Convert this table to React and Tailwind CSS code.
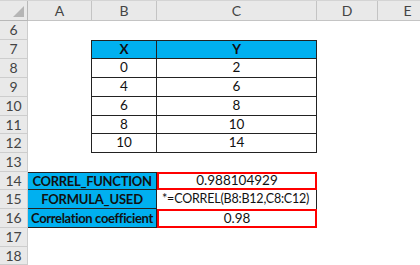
const cols = [
  { name: "A", w: "w-[64px]" },
  { name: "B", w: "w-[65px]" },
  { name: "C", w: "w-[160px]" },
  { name: "D", w: "w-[61px]" },
  { name: "E", w: "w-[60px]" },
];

const table = [
  ["0", "2"],
  ["4", "6"],
  ["6", "8"],
  ["8", "10"],
  ["10", "14"],
];

function RowHead({ n, h }) {
  return (
    <div
      className={`${h} w-[28px] shrink-0 flex items-center justify-center bg-[#e9e9e9] border-r border-b border-[#cdcdcd] text-[#444] text-[14px]`}
    >
      {n}
    </div>
  );
}

function Empty({ w }) {
  return <div className={`${w} shrink-0`} />;
}

export default function App() {
  const rowH = (n) => (n === 11 || n === 14 || n === 18 ? "h-[18px]" : "h-[19px]");

  return (
    <div
      className="w-[420px] h-[265px] overflow-hidden bg-white text-[#111] text-[13.5px] leading-none"
      style={{ fontFamily: "Lato, 'Liberation Sans', sans-serif" }}
    >
      {/* column headers */}
      <div className="flex h-[21px] border-t border-[#d4d4d4] text-[14px]">
        <div className="w-[28px] shrink-0 relative bg-[#e9e9e9] border-r border-b border-[#b8b8b8]">
          <div className="absolute right-[3px] bottom-[3px] w-0 h-0 border-l-[11px] border-l-transparent border-b-[11px] border-b-[#b5b5b5]" />
        </div>
        {cols.map((c) => (
          <div
            key={c.name}
            className={`${c.w} shrink-0 flex items-center justify-center bg-[#e9e9e9] border-r border-b border-[#c4c4c4] text-[#444]`}
          >
            {c.name}
          </div>
        ))}
      </div>

      {/* row 6 */}
      <div className="flex">
        <RowHead n={6} h={rowH(6)} />
      </div>

      {/* row 7 - table header */}
      <div className="flex">
        <RowHead n={7} h={rowH(7)} />
        <Empty w="w-[63px]" />
        <div className="w-[66px] shrink-0 bg-[#00b0f0] border border-[#222] flex items-center justify-center font-bold">
          X
        </div>
        <div className="w-[160px] shrink-0 bg-[#00b0f0] border-t border-r border-b border-[#222] flex items-center justify-center font-bold">
          Y
        </div>
      </div>

      {table.map(([x, y], i) => {
        const n = 8 + i;
        return (
          <div key={n} className="flex">
            <RowHead n={n} h={rowH(n)} />
            <Empty w="w-[63px]" />
            <div className="w-[66px] shrink-0 border-l border-r border-b border-[#222] flex items-center justify-center">
              {x}
            </div>
            <div className="w-[160px] shrink-0 border-r border-b border-[#222] flex items-center justify-center">
              {y}
            </div>
          </div>
        );
      })}

      {/* row 13 */}
      <div className="flex">
        <RowHead n={13} h={rowH(13)} />
      </div>

      {/* row 14 */}
      <div className="flex">
        <RowHead n={14} h={rowH(14)} />
        <div className="w-[129px] shrink-0 bg-[#00b0f0] border-t border-r border-b border-[#222] flex items-center justify-center font-bold text-[13px] tracking-[-0.3px]">
          CORREL_FUNCTION
        </div>
        <div className="w-[160px] shrink-0 border-2 border-[#f00] flex items-center justify-center">
          0.988104929
        </div>
      </div>

      {/* row 15 */}
      <div className="flex">
        <RowHead n={15} h={rowH(15)} />
        <div className="w-[129px] shrink-0 bg-[#00b0f0] border-r border-b border-[#222] flex items-center justify-center font-bold text-[13px] tracking-[-0.2px]">
          FORMULA_USED
        </div>
        <div className="w-[160px] shrink-0 border-r border-[#222] flex items-center pl-[5px] text-[12.5px] tracking-[-0.2px] whitespace-nowrap">
          *=CORREL(B8:B12,C8:C12)
        </div>
      </div>

      {/* row 16 */}
      <div className="flex">
        <RowHead n={16} h={rowH(16)} />
        <div className="w-[129px] shrink-0 bg-[#00b0f0] border-r border-b border-[#222] flex items-center justify-center font-bold whitespace-nowrap text-[13px] tracking-[-0.35px]">
          Correlation coefficient
        </div>
        <div className="w-[160px] shrink-0 border-2 border-[#f00] flex items-center justify-center">
          0.98
        </div>
      </div>

      <div className="flex">
        <RowHead n={17} h={rowH(17)} />
      </div>
      <div className="flex">
        <RowHead n={18} h={rowH(18)} />
      </div>
    </div>
  );
}
